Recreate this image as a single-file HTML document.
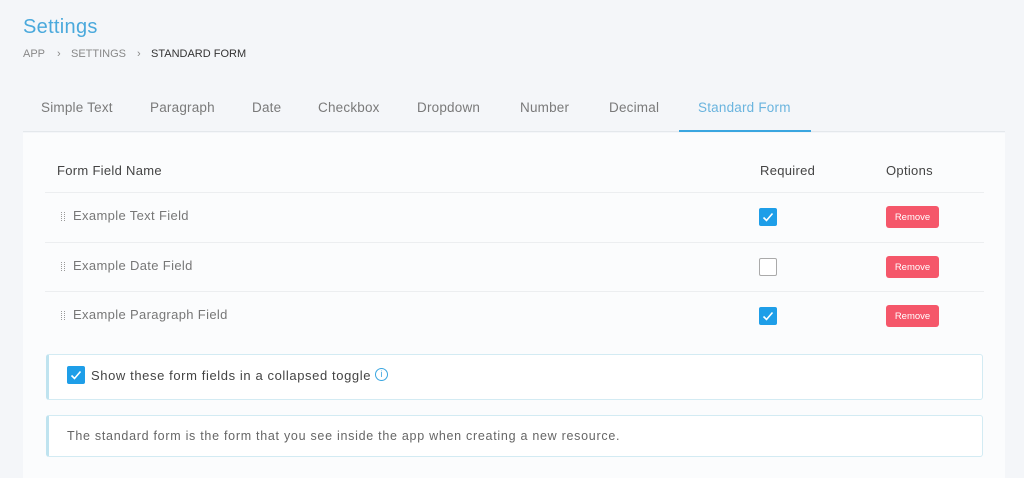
<!DOCTYPE html>
<html><head><meta charset="utf-8"><style>
*{margin:0;padding:0;box-sizing:border-box}
body{width:1024px;height:478px;background:#f4f6f9;font-family:"Liberation Sans",sans-serif;position:relative;overflow:hidden;color:#555}
.a{position:absolute;white-space:nowrap}
h1{position:absolute;left:23px;top:16px;font-size:20px;font-weight:normal;color:#4aa9dc;letter-spacing:0.3px}
.bc{top:48px;font-size:11px;color:#888}
.tab{top:100px;font-size:13.5px;color:#7a7a7a;letter-spacing:0.2px}
.panel{position:absolute;left:23px;top:133px;width:982px;height:345px;background:#fbfcfd}
.line{position:absolute;left:23px;top:131px;width:982px;height:1px;background:#e4e8ec}
.row{position:absolute;left:45px;width:939px;height:1px;background:#eceef0}
.fn{font-size:13px;color:#777;letter-spacing:0.35px}
.grip{position:absolute;width:4px;height:9px;border-left:1px dotted #999;border-right:1px dotted #999}
.cb{position:absolute;left:759px;width:18px;height:18px;border-radius:2px;background:#1e9ee8}
.cb.off{background:#fff;border:1px solid #aaa}
.cb svg{position:absolute;left:3px;top:3px}
.btn{position:absolute;left:886px;width:53px;height:22px;border-radius:3px;background:#f5576a;color:#fff;font-size:9.5px;display:flex;align-items:center;justify-content:center}
.box{position:absolute;left:46px;width:937px;background:#fff;border:1px solid #d3ebf3;border-left:3px solid #bfe3ef;border-radius:3px}
.hd{top:163px;font-size:13px;color:#444;letter-spacing:0.3px}
</style></head><body>
<h1>Settings</h1>
<div class="a bc" style="left:23px">APP</div>
<div class="a bc" style="left:57px">›</div>
<div class="a bc" style="left:71px">SETTINGS</div>
<div class="a bc" style="left:137px">›</div>
<div class="a bc" style="left:151px;color:#333">STANDARD FORM</div>
<div class="a tab" style="left:41px">Simple Text</div>
<div class="a tab" style="left:150px">Paragraph</div>
<div class="a tab" style="left:252px">Date</div>
<div class="a tab" style="left:318px">Checkbox</div>
<div class="a tab" style="left:417px">Dropdown</div>
<div class="a tab" style="left:520px">Number</div>
<div class="a tab" style="left:609px">Decimal</div>
<div class="a tab" style="left:698px;color:#6ab4de">Standard Form</div>
<div class="panel"></div>
<div class="line"></div>
<div class="a" style="left:679px;top:130px;width:132px;height:2px;background:#3aa6e0"></div>
<div class="a hd" style="left:57px">Form Field Name</div>
<div class="a hd" style="left:760px">Required</div>
<div class="a hd" style="left:886px">Options</div>
<div class="row" style="top:192px"></div>
<div class="row" style="top:242px"></div>
<div class="row" style="top:291px"></div>
<div class="grip" style="left:61px;top:212px"></div>
<div class="a fn" style="left:73px;top:208px">Example Text Field</div>
<div class="grip" style="left:61px;top:262px"></div>
<div class="a fn" style="left:73px;top:258px">Example Date Field</div>
<div class="grip" style="left:61px;top:311px"></div>
<div class="a fn" style="left:73px;top:307px">Example Paragraph Field</div>
<div class="cb" style="top:208px"><svg width="12" height="12" viewBox="0 0 12 12"><path d="M1.5 6.5l3 3 6-7" stroke="#fff" stroke-width="1.6" fill="none"/></svg></div>
<div class="cb off" style="top:258px"></div>
<div class="cb" style="top:307px"><svg width="12" height="12" viewBox="0 0 12 12"><path d="M1.5 6.5l3 3 6-7" stroke="#fff" stroke-width="1.6" fill="none"/></svg></div>
<div class="btn" style="top:206px">Remove</div>
<div class="btn" style="top:256px">Remove</div>
<div class="btn" style="top:305px">Remove</div>
<div class="box" style="top:354px;height:46px"></div>
<div class="cb" style="left:67px;top:366px"><svg width="12" height="12" viewBox="0 0 12 12"><path d="M1.5 6.5l3 3 6-7" stroke="#fff" stroke-width="1.6" fill="none"/></svg></div>
<div class="a" style="left:91px;top:368px;font-size:13px;color:#444;letter-spacing:0.6px">Show these form fields in a collapsed toggle</div>
<div class="a" style="left:375px;top:368px;width:13px;height:13px;border:1px solid #3aa6e0;border-radius:50%;color:#3aa6e0;font-size:9px;text-align:center;line-height:11px">i</div>
<div class="box" style="top:415px;height:42px"></div>
<div class="a" style="left:67px;top:429px;font-size:12.5px;color:#666;letter-spacing:0.72px">The standard form is the form that you see inside the app when creating a new resource.</div>
</body></html>
